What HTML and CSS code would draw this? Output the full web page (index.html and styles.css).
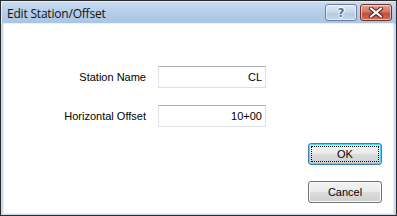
FILE: index.html
```html
<!DOCTYPE html>
<html lang="en">
<head>
  <meta charset="UTF-8">
  <title>Edit Station/Offset</title>
  <link rel="stylesheet" href="styles.css">
</head>
<body>
  <div class="dlg">
    <div class="dlg-title">
      <span class="dlg-caption">Edit Station/Offset</span>
      <div class="cap-btns">
        <span class="cap-btn cap-help">?</span>
        <span class="cap-btn cap-close">
          <svg width="16" height="11" viewBox="0 0 16 11">
            <path d="M3 1.5 L13 9.5 M13 1.5 L3 9.5" stroke="#5a2a24" stroke-width="4.2" stroke-linecap="round"/>
            <path d="M3 1.5 L13 9.5 M13 1.5 L3 9.5" stroke="#fff" stroke-width="2.2" stroke-linecap="round"/>
          </svg>
        </span>
      </div>
    </div>

    <div class="dlg-body">
      <div class="fields">
        <label class="fld-label">Station Name</label>
        <div class="fld-box">CL</div>
        <label class="fld-label">Horizontal Offset</label>
        <div class="fld-box">10+00</div>
      </div>

      <div class="actions">
        <button class="btn btn-default"><span class="focus">OK</span></button>
        <button class="btn">Cancel</button>
      </div>
    </div>
  </div>
</body>
</html>
```

FILE: styles.css
```css
html, body {
  margin: 0;
  padding: 0;
  background: #fff;
}
body {
  font-family: "Liberation Sans", Arial, sans-serif;
  font-size: 11px;
  color: #000;
}

/* window frame */
.dlg {
  width: 397px;
  height: 216px;
  box-sizing: border-box;
  border: 1px solid #2b2b2b;
  display: flex;
  flex-direction: column;
  background: #c7daf0;
}
.dlg-title {
  height: 23px;
  flex: none;
  display: flex;
  align-items: flex-start;
  justify-content: space-between;
  background: linear-gradient(#c9dbf0, #b3cbe8 60%, #a9c4e4);
  box-shadow: inset 1px 1px 0 #e4eefa;
}
.dlg-caption {
  font-family: "Open Sans", "Noto Sans", sans-serif;
  font-size: 12px;
  letter-spacing: -0.2px;
  margin: 4px 0 0 6px;
  color: #111;
}

/* caption buttons */
.cap-btns {
  display: flex;
  gap: 3px;
  margin: 3px 4px 0 0;
}
.cap-btn {
  width: 30px;
  height: 15px;
  border: 1px solid #6d7f96;
  border-radius: 3px;
  display: flex;
  align-items: center;
  justify-content: center;
  box-shadow: inset 0 0 0 1px rgba(255,255,255,0.55);
}
.cap-help {
  background: linear-gradient(#dde8f5, #c5d6ea 50%, #b3c8e0 51%, #c3d6ec);
  font-family: "DejaVu Sans", sans-serif;
  font-weight: bold;
  font-size: 12px;
  line-height: 1;
  color: #5b6f8e;
  text-shadow: 1px 0 0 #fff, -1px 0 0 #fff, 0 1px 0 #fff, 0 -1px 0 #fff;
}
.cap-close {
  border-color: #6e3028;
  background: linear-gradient(#e4a394, #d27766 45%, #c24f3c 55%, #cf6a52);
}

/* client area */
.dlg-body {
  flex: 1;
  margin: 0 3px 2px 3px;
  background: #fff;
  display: flex;
  flex-direction: column;
  box-shadow: 0 0 0 1px #e9f0f9;
}
.fields {
  display: grid;
  grid-template-columns: 142px 108px;
  column-gap: 12px;
  row-gap: 17px;
  align-items: center;
  margin-top: 42px;
}
.fld-label {
  text-align: right;
}
.fld-box {
  height: 22px;
  box-sizing: border-box;
  border: 1px solid #dbdfe6;
  border-top-color: #abadb3;
  border-left-color: #e2e3ea;
  padding-right: 3px;
  text-align: right;
  line-height: 20px;
}

.actions {
  display: flex;
  flex-direction: column;
  align-items: flex-end;
  gap: 16px;
  margin: 16px 11px 0 0;
}
.btn {
  width: 74px;
  height: 22px;
  box-sizing: border-box;
  border: 1px solid #707070;
  border-radius: 3px;
  background: linear-gradient(#f2f2f2, #ebebeb 48%, #dddddd 52%, #cfcfcf);
  box-shadow: inset 0 0 0 1px #fcfcfc;
  font-family: "Liberation Sans", Arial, sans-serif;
  font-size: 11px;
  color: #000;
  padding: 0;
}
.btn-default {
  border-color: #3c7fb1;
  box-shadow: inset 0 0 0 1px #48d8fb;
  padding: 2px;
}
.btn-default .focus {
  display: block;
  height: 100%;
  box-sizing: border-box;
  border: 1px dotted #000;
  line-height: 14px;
}
```
